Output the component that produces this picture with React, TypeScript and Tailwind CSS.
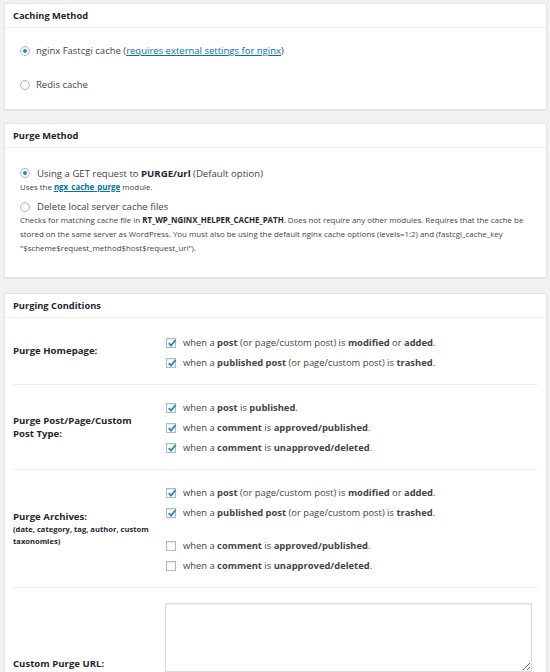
import React from "react";

const font = { fontFamily: '"Open Sans", "Noto Sans", sans-serif' };

const Radio = ({ checked }: { checked?: boolean }) => (
  <span className="flex h-[10px] w-[10px] shrink-0 items-center justify-center rounded-full border border-[#b4b9be] bg-white shadow-[inset_0_1px_2px_rgba(0,0,0,0.1)]">
    {checked && <span className="h-[4px] w-[4px] rounded-full bg-[#1e8cbe]" />}
  </span>
);

const Check = ({ checked }: { checked?: boolean }) => (
  <span className="relative flex h-[10px] w-[10px] shrink-0 items-center justify-center border border-[#b4b9be] bg-white shadow-[inset_0_1px_2px_rgba(0,0,0,0.1)]">
    {checked && (
      <svg viewBox="0 0 10 10" className="absolute left-[0px] top-[-1px] h-[10px] w-[10px]">
        <path d="M1.8 5.2 L4 7.6 L8.6 2" fill="none" stroke="#1e8cbe" strokeWidth="1.8" />
      </svg>
    )}
  </span>
);

const CheckRow = ({ checked, children }: { checked?: boolean; children: React.ReactNode }) => (
  <div className="flex h-[20px] items-center gap-[7px] pl-[1px] text-[9.4px] text-[#444]">
    <Check checked={checked} />
    <span className="whitespace-nowrap">{children}</span>
  </div>
);

const Header = ({ title }: { title: string }) => (
  <div className="flex h-[24px] items-center border-b border-[#eee] px-[8px] text-[9.3px] font-bold text-[#23282d]">
    {title}
  </div>
);

export default function App() {
  return (
    <div className="h-[672px] w-[550px] overflow-hidden bg-[#f1f1f1] pl-[4px] pr-[3px] pt-[3px]" style={font}>
      {/* Caching Method */}
      <div className="h-[107px] border border-[#e5e5e5] bg-white shadow-[0_1px_1px_rgba(0,0,0,0.04)]">
        <Header title="Caching Method" />
        <div className="flex flex-col gap-[14px] pl-[15px] pt-[13px] text-[9.5px] text-[#444]">
          <label className="flex h-[20px] items-center gap-[6px]">
            <Radio checked />
            <span>
              nginx Fastcgi cache (
              <a className="text-[#0073aa] underline">requires external settings for nginx</a>)
            </span>
          </label>
          <label className="flex h-[20px] items-center gap-[6px]">
            <Radio />
            <span>Redis cache</span>
          </label>
        </div>
      </div>

      {/* Purge Method */}
      <div className="mt-[13px] h-[155px] border border-[#e5e5e5] bg-white shadow-[0_1px_1px_rgba(0,0,0,0.04)]">
        <Header title="Purge Method" />
        <div className="pl-[15px] pr-[12px] pt-[17px] text-[#444]">
          <label className="flex h-[16px] items-center gap-[7px] text-[9.6px] leading-[13px]">
            <Radio checked />
            <span>
              Using a GET request to <strong className="text-[#23282d]">PURGE/url</strong> (Default option)
            </span>
          </label>
          <p className="text-[7.9px] leading-[13px]">
            Uses the <a className="font-bold text-[#0073aa] underline">ngx_cache_purge</a> module.
          </p>
          <label className="mt-[6px] flex h-[13px] items-center gap-[7px] text-[9.6px] leading-[13px]">
            <Radio />
            <span>Delete local server cache files</span>
          </label>
          <p className="text-[7.9px] leading-[14px]">
            Checks for matching cache file in <b className="text-[#23282d]">RT_WP_NGINX_HELPER_CACHE_PATH</b>. Does not
            require any other modules. Requires that the cache be stored on the same server as WordPress. You must also
            be using the default nginx cache options (levels=1:2) and (fastcgi_cache_key
            "$scheme$request_method$host$request_uri").
          </p>
        </div>
      </div>

      {/* Purging Conditions */}
      <div className="mt-[15px] border border-[#e5e5e5] bg-white shadow-[0_1px_1px_rgba(0,0,0,0.04)]">
        <Header title="Purging Conditions" />
        <div className="px-[8px]">
          <div className="flex items-center border-b border-[#eee]">
            <div className="w-[152px] shrink-0 text-[9.6px] font-bold text-[#23282d]">Purge Homepage:</div>
            <div className="pb-[11px] pt-[15px]">
              <CheckRow checked>
                when a <b>post</b> (or page/custom post) is <b>modified</b> or <b>added</b>.
              </CheckRow>
              <CheckRow checked>
                when a <b>published post</b> (or page/custom post) is <b>trashed</b>.
              </CheckRow>
            </div>
          </div>

          <div className="flex items-center border-b border-[#eee]">
            <div className="w-[152px] shrink-0 pr-[20px] text-[9.6px] font-bold leading-[13px] text-[#23282d]">
              Purge Post/Page/Custom Post Type:
            </div>
            <div className="pb-[11px] pt-[13px]">
              <CheckRow checked>
                when a <b>post</b> is <b>published</b>.
              </CheckRow>
              <CheckRow checked>
                when a <b>comment</b> is <b>approved/published</b>.
              </CheckRow>
              <CheckRow checked>
                when a <b>comment</b> is <b>unapproved/deleted</b>.
              </CheckRow>
            </div>
          </div>

          <div className="flex items-center border-b border-[#eee]">
            <div className="w-[152px] shrink-0 pr-[4px] font-bold text-[#23282d]">
              <div className="text-[9.6px] leading-[13px]">Purge Archives:</div>
              <div className="text-[7.6px] leading-[12px]">(date, category, tag, author, custom taxonomies)</div>
            </div>
            <div className="pb-[11px] pt-[13px]">
              <CheckRow checked>
                when a <b>post</b> (or page/custom post) is <b>modified</b> or <b>added</b>.
              </CheckRow>
              <CheckRow checked>
                when a <b>published post</b> (or page/custom post) is <b>trashed</b>.
              </CheckRow>
              <div className="h-[13px]" />
              <CheckRow>
                when a <b>comment</b> is <b>approved/published</b>.
              </CheckRow>
              <CheckRow>
                when a <b>comment</b> is <b>unapproved/deleted</b>.
              </CheckRow>
            </div>
          </div>

          <div className="flex items-center">
            <div className="w-[152px] shrink-0 text-[9.6px] font-bold text-[#23282d]">Custom Purge URL:</div>
            <div className="flex-1 pb-[11px] pr-[6px] pt-[15px]">
              <textarea className="block h-[69px] w-full border border-[#ddd] bg-white shadow-[inset_0_1px_2px_rgba(0,0,0,0.07)]" />
              <div className="h-[58px]" />
            </div>
          </div>
        </div>
      </div>
    </div>
  );
}
